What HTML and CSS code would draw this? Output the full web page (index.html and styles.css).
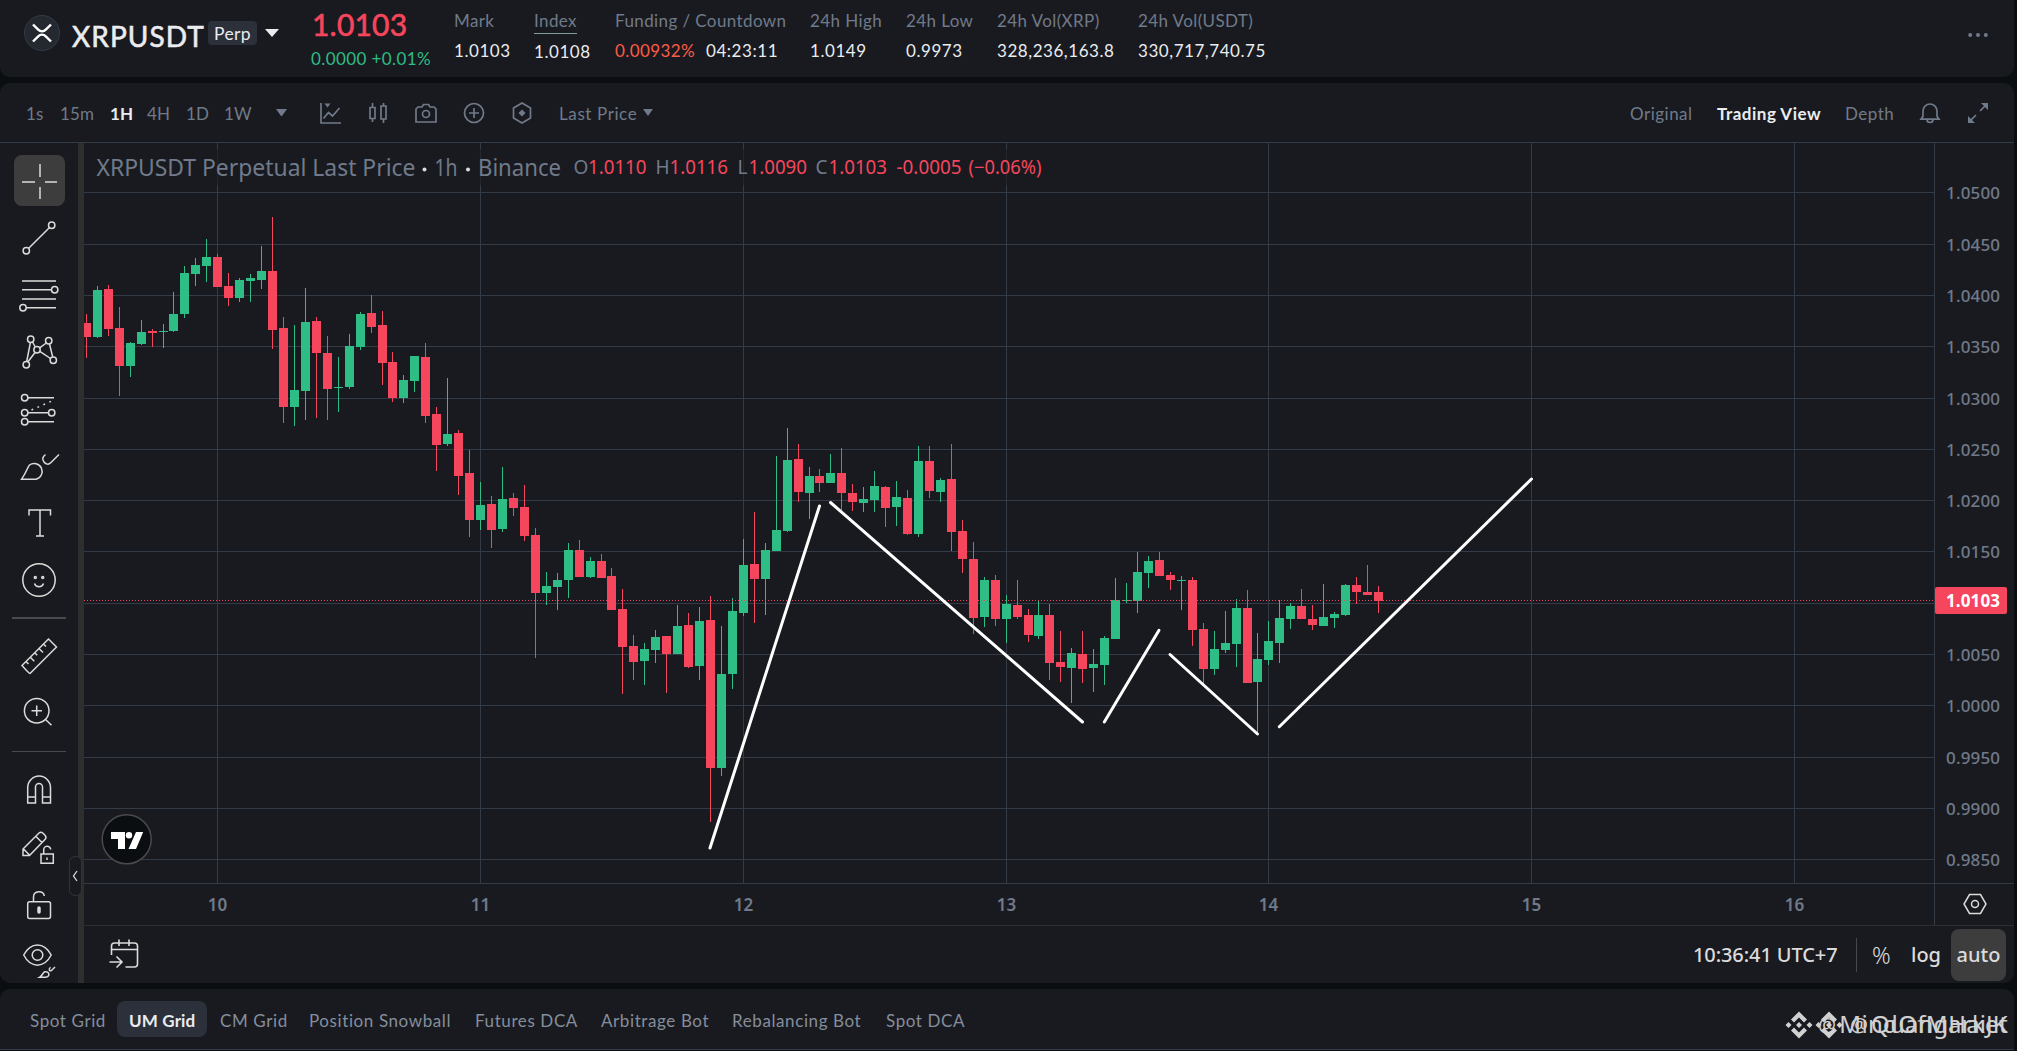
FILE: index.html
```html
<!DOCTYPE html>
<html lang="en">
<head>
    <meta charset="UTF-8">
    <meta name="viewport" content="width=device-width, initial-scale=1.0">
    <title>XRPUSDT Perpetual</title>
    <link rel="stylesheet" href="styles.css">
</head>
<body>
    <header class="panel header">
        <svg class="coin" viewBox="0 0 36 36">
            <circle cx="18" cy="18" r="17.5" fill="#23292f" stroke="#343b47"/>
            <path d="M9 9.500l5.200 5.200a5.400 5.400 0 0 0 7.600 0L27 9.500M9 26.500l5.200-5.200a5.400 5.400 0 0 1 7.600 0L27 26.500" fill="none" stroke="#fff" stroke-width="2.400"/>
        </svg>
        <div class="pair">
            <h1>XRPUSDT</h1>
            <span class="chip">Perp</span>
            <i class="caret big"></i>
        </div>
        <div class="last">
            <div class="last-price">1.0103</div>
            <div class="last-change">0.0000 +0.01%</div>
        </div>
        <div class="stat"><label>Mark</label><span>1.0103</span></div>
        <div class="stat index"><label>Index</label><span>1.0108</span></div>
        <div class="stat"><label>Funding / Countdown</label><span><b>0.00932%</b>04:23:11</span></div>
        <div class="stat"><label>24h High</label><span>1.0149</span></div>
        <div class="stat"><label>24h Low</label><span>0.9973</span></div>
        <div class="stat"><label>24h Vol(XRP)</label><span>328,236,163.8</span></div>
        <div class="stat"><label>24h Vol(USDT)</label><span>330,717,740.75</span></div>
        <svg class="more" width="20" height="6" viewBox="0 0 20 6" fill="#707a8a"><circle cx="2.200" cy="3" r="2"/><circle cx="10" cy="3" r="2"/><circle cx="17.800" cy="3" r="2"/></svg>
    </header>

    <main class="panel main">
        <div class="toolbar">
            <div class="intervals">
                <span>1s</span><span>15m</span><span class="on">1H</span><span>4H</span><span>1D</span><span>1W</span>
                <i class="caret"></i>
            </div>
            <div class="tools">
                <svg viewBox="0 0 24 24"><path d="M3 2v20h20M5.500 17.500l5-6 4 3.500 7-8"/><path d="M6.500 2.500h6l-3 4z" class="solid"/></svg>
                <svg viewBox="0 0 24 24"><path d="M4 6.500h5v11H4zM6.500 2v4.500M6.500 17.500V21M15 5h5v13h-5zM17.500 2v3M17.500 18v4"/></svg>
                <svg viewBox="0 0 24 24"><path d="M4 6h4l1.500-2.500h5L16 6h4l2 2v13H2V8z"/><circle cx="12" cy="13" r="3.500"/></svg>
                <svg viewBox="0 0 24 24"><circle cx="12" cy="12" r="9.500"/><path d="M12 7v10M7 12h10"/></svg>
                <svg viewBox="0 0 24 24"><path d="M12 2l8.500 5v10L12 22l-8.500-5V7z"/><path d="M12 8.500l3.500 3.500-3.500 3.500L8.500 12z" class="solid"/></svg>
            </div>
            <span class="price-type">Last Price</span>
            <i class="caret"></i>
            <div class="views">
                <span>Original</span><span class="on">Trading View</span><span>Depth</span>
                <svg viewBox="0 0 24 24"><path d="M3 18.200h18l-2-3V10a7 7 0 0 0-14 0v5.200zM9 18.500a3 3 0 0 0 6 0"/></svg>
                <svg viewBox="0 0 24 24"><path d="M14 10l7-7M10 14l-7 7"/><path d="M15 2h7v7zM2 15v7h7z" class="solid"/></svg>
            </div>
        </div>

        <div class="workspace">
            <aside class="drawing">
                <svg viewBox="12 153 54 57"><rect x="14" y="155" width="51" height="51" rx="8" fill="#3d3d3d" stroke="none"/><path d="M40 164v13M40 187v12M22 182h13M45 182h12"/></svg>
                <svg viewBox="12 210 54 57"><circle cx="51.700" cy="225.300" r="3.200"/><circle cx="26.300" cy="250.700" r="3.200"/><path d="M49.300 227.700L28.700 248.300"/></svg>
                <svg viewBox="12 267 54 57"><path d="M22 281h34M22 289.700h29.500M22 299h34M26 307.700h30"/><circle cx="54.700" cy="289.700" r="3.200"/><circle cx="23" cy="307.700" r="3.200"/></svg>
                <svg viewBox="12 324 54 57"><circle cx="30.700" cy="339.300" r="3.200"/><circle cx="48.700" cy="340.700" r="3.200"/><circle cx="37" cy="349.700" r="3.200"/><circle cx="26.300" cy="364.700" r="3.200"/><circle cx="53.300" cy="360.300" r="3.200"/><path d="M30.400 342.500L26.700 361.500M32.500 342l2.800 5M46.300 343l-6.700 4.800M49.500 344l3.200 13M39.800 351.300l10.700 7.200M35.200 352.300l-7.200 9.500"/></svg>
                <svg viewBox="12 381 54 57"><circle cx="24.700" cy="397.700" r="3.200"/><circle cx="24.700" cy="412.700" r="3.200"/><circle cx="51.700" cy="412.700" r="3.200"/><circle cx="24.700" cy="421.700" r="3.200"/><path d="M28 397.700h26M28 412.700h20.500M28 421.700h26"/><path d="M31.500 410L53 400.500" stroke-dasharray="1.800 4.700"/></svg>
                <svg viewBox="12 438 54 57"><path d="M21.500 479.300H36a8 8 0 1 0-6.500-14.300c-2 2-1.800 5-8 14.300zM59 454.500l-8 8c-2.500 2.500-5 2-7-.500-2-2.500-1.700-5 1.500-7.500"/></svg>
                <svg viewBox="12 495 54 57"><path d="M29 515.500V510h21.500v5.500M40 510v26.500M36 536h8"/></svg>
                <svg viewBox="12 552 54 57"><circle cx="39" cy="580" r="16.200"/><path d="M34.500 583.500c1.200 4.200 7.800 4.200 9 0"/><circle cx="35.300" cy="577.500" r="1" /><circle cx="42.700" cy="577.500" r="1"/></svg>
                <hr class="thick">
                <svg viewBox="12 628 54 57"><path d="M22 665.500L48.500 639l8 8L30 673.500q-1 0-8-8zM26 661.500l2.500 2.500M30.300 657.200l4 4M34.700 652.800l2.500 2.500M39 648.500l4 4M43.500 644l2.500 2.500"/></svg>
                <svg viewBox="12 685 54 57"><circle cx="36.700" cy="710.700" r="12.300"/><path d="M36.700 705.500v10.500M31.500 710.700h10.500M45.500 719.500l6 5.700"/></svg>
                <hr>
                <svg viewBox="12 761 54 57"><path d="M27.700 803v-15.500a11.400 11.400 0 0 1 22.800 0V803h-8v-16a3.500 3.500 0 0 0-7 0v16zM27.700 797h7.500M43 797h7.500"/></svg>
                <svg viewBox="12 818 54 57"><path d="M23 855.500v-6.500l16-16q2-1.500 4 .3l2 2q1.800 2 .2 4L29.500 855.500zM23.500 849l6 6M36 836.500l6 6M41 854h12.300v9.200H41zM43.700 854v-4a3.500 3.500 0 0 1 7-.5M47 857.500v2.500"/></svg>
                <svg viewBox="12 875 54 57"><rect x="27.700" y="901.700" width="22.800" height="16.700" rx="2"/><path d="M33.500 901.500v-4.500c0-6.500 10.500-7 10.800-1"/><path d="M39 908v4" stroke-width="3.500" stroke-linecap="round"/></svg>
                <svg viewBox="12 932 54 51" class="cut"><path d="M23.700 955c7-13.500 20.500-13.500 27.500 0-7 13.500-20.500 13.500-27.500 0z"/><circle cx="37.500" cy="955" r="5.300"/><path d="M39.500 977.300h6c5.500-.5 3.500-6.500-.5-5.500-2.500.8-2 3.500-5.500 5.500zM55 967l-3.500 3.500c-1.800 1-3.500-1-1-3.200"/></svg>
            </aside>

            <div class="chart-area">
                <div class="plot-row">
                    <svg id="plot" viewBox="84 143 1850 740">
                        <g id="grid"></g>
                        <g id="candles" shape-rendering="crispEdges"></g>
                        <path class="last-line" d="M84 600.500H1934"/>
                        <g class="trend">
                            <path d="M710 848L819.500 506"/>
                            <path d="M830.500 502.500L1082.500 722"/>
                            <path d="M1104.300 722L1159 630.300"/>
                            <path d="M1170 654.500L1257.500 734"/>
                            <path d="M1279.300 726.700L1531.500 479"/>
                        </g>
                        <rect class="veil" x="90" y="149" width="955" height="36"/>
                        <g class="legend">
                            <text x="96.500" y="176" textLength="319" lengthAdjust="spacingAndGlyphs">XRPUSDT Perpetual Last Price</text>
                            <circle cx="424.500" cy="169.500" r="2"/>
                            <text x="434.500" y="176" textLength="23" lengthAdjust="spacingAndGlyphs">1h</text>
                            <circle cx="468" cy="169.500" r="2"/>
                            <text x="478" y="176" textLength="83" lengthAdjust="spacingAndGlyphs">Binance</text>
                        </g>
                        <g class="ohlc">
                            <text x="573.500" y="173.500">O</text><text class="v" x="588" y="173.500" textLength="58.500" lengthAdjust="spacingAndGlyphs">1.0110</text>
                            <text x="655.500" y="173.500">H</text><text class="v" x="669.500" y="173.500" textLength="58.500" lengthAdjust="spacingAndGlyphs">1.0116</text>
                            <text x="737.500" y="173.500">L</text><text class="v" x="748.500" y="173.500" textLength="58.500" lengthAdjust="spacingAndGlyphs">1.0090</text>
                            <text x="815.500" y="173.500">C</text><text class="v" x="828.500" y="173.500" textLength="58.500" lengthAdjust="spacingAndGlyphs">1.0103</text>
                            <text class="v" x="896.500" y="173.500" textLength="65" lengthAdjust="spacingAndGlyphs">-0.0005</text><text class="v" x="968.500" y="173.500" textLength="73" lengthAdjust="spacingAndGlyphs">(−0.06%)</text>
                        </g>
                        <circle cx="126.700" cy="839.300" r="24.500" fill="#0b0e11" stroke="#4a4a4e" stroke-width="1.500"/>
                        <path fill="#fff" d="M111 832h14v17h-7v-10h-7zM136 832h7.200l-7.200 17h-7.500z"/>
                        <circle cx="129" cy="835.300" r="3.200" fill="#fff"/>
                    </svg>
                    <svg id="prices" viewBox="1934 143 80 740"></svg>
                </div>
                <div class="time-row">
                    <svg id="days" viewBox="84 884 1850 41"></svg>
                    <div class="axis-settings">
                        <svg viewBox="0 0 24 24"><path d="M6.500 2.500h11L23 12l-5.500 9.500h-11L1 12z"/><circle cx="12" cy="12" r="3.500"/></svg>
                    </div>
                </div>
                <div class="bottom-row">
                    <svg class="goto" viewBox="0 0 32 32"><path d="M3.500 17V8q0-3 3-3h20q3 0 3 3v18q0 3-3 3h-9M3.500 11.500h26M11 1.500V8M21 1.500V8M1.500 24h12M8.500 18.500L14 24l-5.500 5.500"/></svg>
                    <span class="clock">10:36:41 UTC+7</span>
                    <span class="divider"></span>
                    <span class="percent">%</span>
                    <span class="log">log</span>
                    <span class="auto">auto</span>
                </div>
            </div>
            <div class="handle"><svg viewBox="0 0 10 12"><path d="M7 1L3.500 6 7 11"/></svg></div>
        </div>
    </main>

    <nav class="panel tabs">
        <span>Spot Grid</span>
        <span class="on">UM Grid</span>
        <span>CM Grid</span>
        <span>Position Snowball</span>
        <span>Futures DCA</span>
        <span>Arbitrage Bot</span>
        <span>Rebalancing Bot</span>
        <span>Spot DCA</span>
    </nav>

    <svg class="watermark" viewBox="1780 1005 234 40">
        <defs>
            <path id="diamond" d="M0-13.500L8-5.500 5-2.500 0-7.500-5-2.500-8-5.500zM0 13.500L8 5.500 5 2.500 0 7.500-5 2.500-8 5.500zM0-3L3 0 0 3-3 0zM-10.500-3l3 3-3 3-3-3zM10.500-3l3 3-3 3-3-3z"/>
        </defs>
        <use href="#diamond" x="1799" y="1025"/>
        <use href="#diamond" x="1829" y="1025"/>
        <text x="1818" y="1033" textLength="190"><tspan font-size="20" dy="-1.500">@</tspan><tspan dx="3" dy="1.500">MindOfMarket</tspan></text>
        <text x="1850" y="1033" textLength="158"><tspan font-size="20" dy="-1.500">@</tspan><tspan dx="3" dy="1.500">QuangHaiJK</tspan></text>
    </svg>

    <script src="chart.js"></script>
</body>
</html>
```
FILE: styles.css
```css
* { margin: 0; padding: 0; box-sizing: border-box; }

body {
    width: 2017px;
    height: 1051px;
    overflow: hidden;
    background: #0b0e11;
    color: #eaecef;
    font-family: Lato, "Open Sans", sans-serif;
    font-size: 17px;
    letter-spacing: 0.4px;
    position: relative;
}

svg { display: block; }

.panel {
    width: 2014px;
    background: #191a1f;
    border-radius: 10px;
}

.caret {
    border: 5.5px solid transparent;
    border-top: 7px solid #707a8a;
    border-bottom: 0;
}

.caret.big {
    border-width: 8px 7px 0;
    border-top-color: #eaecef;
}

/* Header */
.header {
    height: 77px;
    border-radius: 0 0 10px 10px;
    padding-left: 24px;
    display: grid;
    grid-template-columns: 48px 239px 143px 80px 81px 195px 96px 91px 141px 1fr 46px;
}

.coin {
    width: 36px;
    height: 36px;
    margin-top: 15px;
}

.pair {
    display: flex;
    align-items: flex-start;
}

.pair h1 {
    width: 136px;
    font-size: 28px;
    font-weight: 400;
    line-height: 34px;
    margin-top: 19px;
    letter-spacing: 1.1px;
    -webkit-text-stroke: 0.6px #eaecef;
}

.chip {
    width: 49px;
    height: 24px;
    margin: 21px 8px 0 0;
    background: #2b303b;
    border-radius: 4px;
    text-align: center;
    line-height: 26px;
    font-size: 17.5px;
}

.pair .caret { margin-top: 29px; }

.last-price {
    font-size: 30px;
    line-height: 34px;
    margin: 7px 0 0 1px;
    letter-spacing: 0.2px;
    color: #f6465d;
    -webkit-text-stroke: 0.6px #f6465d;
}

.last-change {
    color: #2ebd85;
    line-height: 20px;
    margin-top: 8px;
    white-space: nowrap;
}

.stat label {
    display: block;
    width: max-content;
    color: #707a8a;
    line-height: 20px;
    margin-top: 11px;
}

.stat span {
    display: block;
    line-height: 20px;
    margin-top: 10px;
    letter-spacing: 0.55px;
    white-space: nowrap;
}

.stat b {
    font-weight: 400;
    letter-spacing: 0.4px;
    color: #fd5b46;
    margin-right: 11px;
}

.index label {
    height: 23px;
    border-bottom: 1px solid #7e9a99;
}

.index span { margin-top: 8px; }

.more { margin-top: 32px; }

/* Chart toolbar */
.main {
    height: 900px;
    margin-top: 6px;
    overflow: hidden;
}

.toolbar {
    height: 60px;
    padding-left: 26px;
    border-bottom: 1px solid #333b47;
    display: flex;
    align-items: center;
    color: #707a8a;
}

.toolbar span { padding-top: 2px; }

.toolbar svg {
    width: 24px;
    height: 24px;
    fill: none;
    stroke: #707a8a;
    stroke-width: 1.7;
}

.toolbar .solid { fill: #707a8a; stroke: none; }

.toolbar .on {
    color: #eaecef;
    font-weight: 700;
}

.intervals {
    display: grid;
    grid-template-columns: 34px 50px 37px 39px 38px 52px 41px;
    align-items: center;
    letter-spacing: 0.2px;
}

.intervals .caret { width: 11px; }

.tools {
    display: grid;
    grid-template-columns: repeat(5, 48px);
    margin: 1px 1px 0 1px;
}

.price-type {
    width: 84px;
    letter-spacing: 0.6px;
}

.views {
    margin-left: auto;
    display: grid;
    grid-template-columns: 87px 128px 73px 48px 48px;
    align-items: center;
    letter-spacing: 0.5px;
}

/* Drawing tools */
.workspace {
    display: flex;
    height: 840px;
    position: relative;
}

.drawing {
    width: 84px;
    border-right: 6px solid #2e2e2e;
    padding: 10px 12px 0;
}

.drawing svg {
    width: 54px;
    height: 57px;
    fill: none;
    stroke: #dbdbdb;
    stroke-width: 1.5;
}

.drawing svg.cut { height: 51px; }

.drawing hr {
    border: 0;
    height: 1px;
    background: #4a4a4e;
    margin: 9px 0;
}

.drawing hr.thick {
    height: 2px;
    margin: 8px 0 9px;
}

.handle {
    position: absolute;
    left: 69px;
    top: 713px;
    width: 13px;
    height: 40px;
    border: 1px solid #333;
    border-radius: 6px;
    background: #191a1f;
    display: flex;
    align-items: center;
}

.handle svg {
    width: 10px;
    height: 12px;
    fill: none;
    stroke: #dbdbdb;
    stroke-width: 1.3;
}

/* Chart */
.chart-area {
    width: 1930px;
    letter-spacing: 0;
}

.plot-row, .time-row, .bottom-row { display: flex; }

.plot-row {
    height: 741px;
    border-bottom: 1px solid #333b47;
}

#plot { width: 1850px; height: 740px; }

#prices { width: 80px; height: 740px; }

.grid-line { fill: #333b47; }

.up { fill: #2ebd85; }

.down { fill: #f6465d; }

.last-line {
    stroke: #f6465d;
    stroke-dasharray: 1 2;
    shape-rendering: crispEdges;
}

.trend {
    stroke: #fff;
    stroke-width: 3;
    stroke-linecap: round;
}

.veil { fill: #191a1f; opacity: 0.6; }

.legend {
    font: 24px "Noto Sans", sans-serif;
    fill: #707a8a;
}

.legend circle { fill: #dbdbdb; }

.ohlc {
    font: 19px "Noto Sans", sans-serif;
    fill: #707a8a;
}

.ohlc .v { fill: #f6465d; }

.axis-text {
    font: 500 17px "Noto Sans", sans-serif;
    fill: #707a8a;
}

.axis-text.day {
    font-weight: 600;
    text-anchor: middle;
}

.tag-text {
    font: 700 17px "Noto Sans", sans-serif;
    fill: #fff;
}

.time-row {
    height: 42px;
    border-bottom: 1px solid #2e2e32;
}

#days { width: 1850px; height: 41px; }

.axis-settings {
    width: 80px;
    border-left: 1px solid #333b47;
    padding: 8px 0 0 28px;
}

.axis-settings svg {
    width: 24px;
    height: 24px;
    fill: none;
    stroke: #dbdbdb;
    stroke-width: 1.5;
}

.bottom-row {
    height: 57px;
    align-items: center;
    font: 500 20px "Noto Sans", sans-serif;
    color: #dbdbdb;
    padding: 0 8px 0 24px;
    position: relative;
}

.goto {
    width: 32px;
    height: 32px;
    margin-bottom: 2px;
    fill: none;
    stroke: #dbdbdb;
    stroke-width: 1.6;
}

.clock {
    margin-left: auto;
    width: 163px;
    letter-spacing: -0.1px;
    white-space: nowrap;
}

.divider {
    width: 1px;
    height: 34px;
    background: #46464c;
}

.percent {
    width: 54px;
    padding-left: 15px;
    font-size: 23px;
    font-weight: 300;
}

.log { width: 40px; }

.auto {
    width: 55px;
    height: 52px;
    line-height: 52px;
    border-radius: 8px;
    background: #3d3d3d;
    text-align: center;
}

/* Bot tabs */
.tabs {
    height: 61px;
    margin-top: 6px;
    padding: 12px 0 0 18px;
    border-bottom: 1px solid #333b47;
    border-radius: 10px 10px 0 0;
    display: grid;
    grid-template-columns: 99px 91px 89px 166px 126px 131px 154px 105px;
    color: #848e9c;
    line-height: 39px;
    letter-spacing: 0.6px;
}

.tabs span {
    height: 36px;
    padding-left: 12px;
    white-space: nowrap;
}

.tabs .on {
    width: 90px;
    background: #2b303b;
    border-radius: 8px;
    color: #eaecef;
    font-weight: 700;
    letter-spacing: 0.15px;
}

.watermark {
    position: absolute;
    left: 1780px;
    top: 1005px;
    width: 234px;
    height: 40px;
    fill: #fff;
    opacity: 0.8;
    font: 24px "Noto Sans", sans-serif;
}
```
FILE: chart.js
```js
const NS = 'http://www.w3.org/2000/svg';

// direction, x, high, body top, body bottom, low
const candles = `
R 86 314 323 337 358|G 97 286 290 337 338|R 108 285 289 329 336|R 119 307 328 366 396|G 130 342 343 366 377
G 141 320 332 344 345|R 152 329 331 333 347|G 163 324 331 332 348|G 173 292 314 331 332|G 184 266 273 314 318
G 195 258 265 274 286|G 206 239 257 266 282|R 217 254 257 287 287|R 228 273 286 298 306|G 239 278 280 298 302
G 250 274 278 281 302|G 261 246 271 280 289|R 272 217 271 330 349|R 283 317 328 407 423|G 294 325 390 407 426
G 305 288 322 391 420|R 316 317 321 353 418|R 327 336 353 389 420|G 338 357 387 388 412|G 349 334 346 387 389
G 360 312 314 347 350|R 371 295 313 327 333|R 382 311 325 363 385|R 392 352 362 398 402|G 403 375 380 398 403
G 414 356 356 381 392|R 425 343 357 416 423|R 436 407 414 445 471|G 447 378 434 444 446|R 458 430 433 476 495
R 469 450 473 520 537|G 480 482 505 520 530|R 491 496 504 530 548|G 502 467 499 529 532|R 513 493 498 508 516
R 524 485 507 536 541|R 535 528 535 593 658|G 546 572 586 593 605|G 557 573 580 587 610|G 568 543 550 580 598
R 579 540 550 577 577|G 590 557 561 577 578|R 601 554 561 578 578|R 611 568 576 610 610|R 622 589 609 647 694
R 633 635 646 662 680|G 644 643 649 661 685|G 655 630 637 650 663|R 666 636 636 654 693|G 677 605 626 654 654
R 688 613 625 667 668|G 699 607 621 666 680|R 710 596 620 768 822|G 721 626 674 768 776|G 732 598 611 674 689
G 743 539 565 613 616|R 754 512 564 579 623|G 765 543 550 579 615|G 776 456 530 551 551|G 787 428 460 531 532
R 798 444 459 492 502|G 809 467 476 493 519|R 819 469 476 483 492|G 830 454 473 483 483|R 841 448 473 493 510
R 852 484 493 502 511|G 863 487 499 503 512|G 874 471 486 500 512|R 885 486 487 508 527|G 896 481 497 507 526
R 907 490 498 534 535|G 918 446 461 534 537|R 929 446 461 491 498|G 940 478 480 492 502|R 951 444 479 532 551
R 962 520 531 559 573|R 973 542 559 618 634|G 984 577 580 617 627|R 995 575 580 619 626|G 1006 595 604 619 643
R 1017 580 605 617 619|R 1028 609 615 635 642|G 1038 601 615 636 639|R 1049 604 615 663 680|R 1060 631 662 667 682
G 1071 648 653 668 703|R 1082 631 654 669 683|G 1093 649 664 668 692|G 1104 636 638 665 685|G 1115 578 600 639 639
G 1126 583 600 601 603|G 1137 552 572 601 613|G 1148 556 561 573 588|R 1159 552 560 576 576|R 1170 572 575 580 590
G 1181 576 580 581 610|R 1192 577 580 630 646|R 1203 623 629 669 684|G 1214 631 649 669 675|G 1225 611 643 650 653
G 1236 599 608 644 667|R 1247 590 608 683 683|G 1257 633 659 682 733|G 1268 621 641 660 665|G 1279 600 618 643 663
G 1290 603 606 619 629|R 1301 589 606 619 619|R 1312 605 619 625 630|G 1323 584 617 626 626|G 1334 612 614 618 628
G 1345 584 585 615 616|R 1356 577 585 592 604|R 1367 565 592 595 595|R 1378 586 592 601 613`;

const priceRows = [192, 244, 295, 346, 398, 449, 500, 551, 603, 654, 705, 757, 808, 859];
const dayColumns = [217, 480, 743, 1006, 1268, 1531, 1794];

function add(parent, tag, attrs, text) {
    const el = document.createElementNS(NS, tag);
    for (const key in attrs) el.setAttribute(key, attrs[key]);
    if (text) el.textContent = text;
    parent.appendChild(el);
}

const grid = document.getElementById('grid');
const prices = document.getElementById('prices');
const days = document.getElementById('days');
const series = document.getElementById('candles');

add(prices, 'rect', { x: 1934, y: 143, width: 1, height: 740, class: 'grid-line' });

priceRows.forEach((y, i) => {
    add(grid, 'rect', { x: 84, y: y, width: 1850, height: 1, class: 'grid-line' });
    // the 1.0100 label sits under the last price tag
    if (y !== 603) {
        add(prices, 'text', { x: 1946, y: y + 6.5, textLength: 54, class: 'axis-text' }, (1.05 - i * 0.005).toFixed(4));
    }
});

dayColumns.forEach((x, i) => {
    add(grid, 'rect', { x: x, y: 143, width: 1, height: 740, class: 'grid-line' });
    add(days, 'text', { x: x + 0.5, y: 911, class: 'axis-text day' }, String(10 + i));
});

add(prices, 'rect', { x: 1935, y: 587, width: 72, height: 27, rx: 2, class: 'down' });
add(prices, 'text', { x: 1946, y: 607, class: 'tag-text', textLength: 54 }, '1.0103');

candles.trim().split(/[|\n]/).forEach(row => {
    const [dir, x, high, top, bottom, low] = row.split(' ').map((v, i) => i ? +v : v);
    const cls = dir === 'G' ? 'up' : 'down';
    add(series, 'rect', { x: x, y: high, width: 1, height: low - high, class: cls });
    add(series, 'rect', { x: x - 4, y: top, width: 9, height: bottom - top, class: cls });
});
```
